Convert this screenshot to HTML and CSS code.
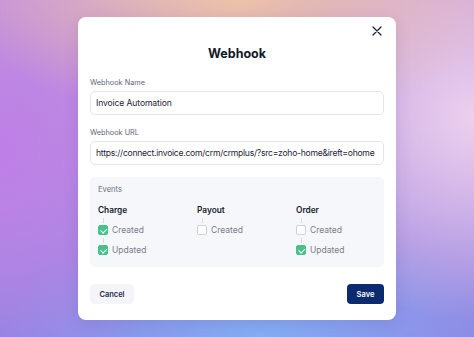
FILE: index.html
```html
<!DOCTYPE html>
<html>
<head>
<meta charset="utf-8">
<link rel="stylesheet" href="styles.css">
</head>
<body>
<div class="stage">
  <div class="modal">
    <div class="modal-top">
      <button class="close" aria-label="Close">
        <svg width="10" height="10" viewBox="0 0 10 10"><path d="M1 1L9 9M9 1L1 9" stroke="#1c2640" stroke-width="1.3" stroke-linecap="round"/></svg>
      </button>
    </div>
    <h1 class="title">Webhook</h1>
    <label class="field-label">Webhook Name</label>
    <div class="input">Invoice Automation</div>
    <label class="field-label second">Webhook URL</label>
    <div class="input url">https://connect.invoice.com/crm/crmplus/?src=zoho-home&amp;ireft=ohome</div>
    <div class="events">
      <div class="events-title">Events</div>
      <div class="events-grid">
        <div class="group">
          <div class="group-name">Charge</div>
          <div class="opt"><span class="box on"></span><span>Created</span></div>
          <div class="opt"><span class="box on"></span><span>Updated</span></div>
        </div>
        <div class="group">
          <div class="group-name">Payout</div>
          <div class="opt"><span class="box"></span><span>Created</span></div>
        </div>
        <div class="group">
          <div class="group-name">Order</div>
          <div class="opt"><span class="box"></span><span>Created</span></div>
          <div class="opt"><span class="box on"></span><span>Updated</span></div>
        </div>
      </div>
    </div>
    <div class="footer">
      <button class="btn cancel">Cancel</button>
      <button class="btn save">Save</button>
    </div>
  </div>
</div>
</body>
</html>
```
FILE: styles.css
```css
* { box-sizing: border-box; }
html, body { margin: 0; padding: 0; }
body {
  width: 474px;
  height: 337px;
  overflow: hidden;
  font-family: Inter, "Noto Sans", sans-serif;
}
.stage {
  width: 474px;
  height: 337px;
  padding: 17px 0 0 78px;
  background:
    radial-gradient(ellipse 60% 35% at 50% 0%, #ecc2a8 0%, rgba(236,194,168,0) 100%),
    radial-gradient(ellipse 45% 60% at 100% 35%, #ecd0ee 0%, rgba(236,208,238,0) 100%),
    radial-gradient(ellipse 45% 70% at 0% 45%, #bf7fe6 0%, rgba(191,127,230,0) 100%),
    radial-gradient(ellipse 55% 35% at 55% 100%, #84aef4 0%, rgba(132,174,244,0) 100%),
    linear-gradient(180deg, #c99ad8 0%, #a98ee0 60%, #8f84e2 100%);
}
.modal {
  width: 318px;
  height: 303px;
  background: #fff;
  border-radius: 8px;
  padding: 9px 12px 16px;
  display: flex;
  flex-direction: column;
  box-shadow: 0 4px 16px rgba(60, 40, 120, 0.12);
}
.modal-top {
  display: flex;
  justify-content: flex-end;
  height: 10px;
  padding-right: 2px;
}
.close {
  border: 0;
  background: none;
  padding: 0;
  width: 10px;
  height: 10px;
  display: block;
}
.close svg { display: block; }
.title {
  margin: 9px 0 0;
  font-size: 12.5px;
  line-height: 18px;
  font-weight: 700;
  text-align: center;
  color: #111727;
}
.field-label {
  display: block;
  margin-top: 14px;
  font-size: 7.3px;
  line-height: 11px;
  color: #5f6777;
}
.field-label.second { margin-top: 12px; }
.input {
  margin-top: 3px;
  height: 24px;
  border: 1px solid #e3e6ec;
  border-radius: 5px;
  padding: 0 5px;
  font-size: 8.6px;
  letter-spacing: -0.12px;
  line-height: 22px;
  color: #1e2636;
  white-space: nowrap;
  overflow: hidden;
}
.input.url {
  letter-spacing: -0.26px;
}
.events {
  margin-top: 12px;
  height: 90px;
  background: #f6f7fa;
  border-radius: 5px;
  padding: 8px 8px 0;
}
.events-title {
  font-size: 7.6px;
  line-height: 10px;
  color: #6b7280;
}
.events-grid {
  margin-top: 9px;
  display: grid;
  grid-template-columns: 99px 99px 80px;
}
.group-name {
  font-size: 8.3px;
  line-height: 12px;
  font-weight: 600;
  color: #161c2c;
}
.opt {
  margin-top: 8px;
  display: flex;
  align-items: center;
  gap: 4px;
  height: 12px;
  font-size: 8.5px;
  color: #787e8a;
  position: relative;
}
.opt::before {
  content: "";
  position: absolute;
  left: 4.5px;
  top: -6px;
  width: 1px;
  height: 5px;
  background: #d6d9df;
}
.box {
  width: 10px;
  height: 10px;
  border-radius: 2px;
  border: 1px solid #cdd1d8;
  background: #fff;
  flex: none;
  position: relative;
}
.box.on {
  background: #47c38a;
  border-color: #47c38a;
}
.box.on::after {
  content: "";
  position: absolute;
  left: 2.6px;
  top: 1.4px;
  width: 2.5px;
  height: 4.5px;
  border: solid #fff;
  border-width: 0 1.1px 1.1px 0;
  transform: rotate(45deg);
}
.footer {
  margin-top: auto;
  display: flex;
  justify-content: space-between;
}
.btn {
  height: 20px;
  border: 0;
  border-radius: 4px;
  font-family: Inter, "Noto Sans", sans-serif;
  font-size: 7.5px;
  font-weight: 600;
  padding: 0;
}
.cancel {
  width: 44px;
  background: #f4f5f8;
  color: #1f2b4d;
}
.save {
  width: 37px;
  background: #0c2b6e;
  color: #fff;
}
```
